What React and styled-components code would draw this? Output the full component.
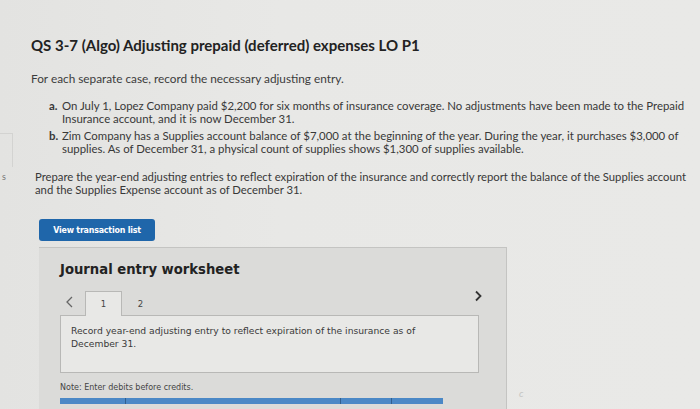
import React from "react";
import styled, { createGlobalStyle } from "styled-components";

const Global = createGlobalStyle`
  html, body {
    margin: 0;
    padding: 0;
    background: #e7e7e5;
    overflow: hidden;
  }
`;

const Page = styled.div`
  display: flex;
  width: 700px;
  height: 409px;
  overflow: hidden;
  background: linear-gradient(90deg, #e3e3e1 0%, #e8e8e6 40%, #e9e9e7 100%);
  font-family: Lato, "Open Sans", sans-serif;
  color: #333;
`;

const Sidebar = styled.div`
  width: 13px;
  flex-shrink: 0;
  padding-top: 133px;
  display: flex;
  flex-direction: column;
`;

const SideCell = styled.div`
  height: 33px;
  border-top: 1px solid #d3d3d1;
  border-right: 1px solid #d3d3d1;
`;

const SideLabel = styled.div`
  margin-top: 4px;
  font-size: 9px;
  color: #777;
  padding-left: 2px;
`;

const Main = styled.div`
  flex: 1;
  padding: 35px 0 0 18px;
  display: flex;
  flex-direction: column;
`;

const Title = styled.h1`
  margin: 0;
  font-size: 15px;
  line-height: 20px;
  font-weight: 700;
  color: #222;
`;

const Intro = styled.p`
  margin: 17px 0 0;
  font-size: 11.8px;
  line-height: 14px;
  color: #3c3c3c;
`;

const List = styled.div`
  margin: 13px 0 0 18px;
  width: 640px;
  display: flex;
  flex-direction: column;
  gap: 4px;
`;

const Item = styled.div`
  display: flex;
  font-size: 11.4px;
  line-height: 13px;
  color: #383838;
`;

const Mark = styled.span`
  width: 13px;
  flex-shrink: 0;
  font-weight: 700;
`;

const Prepare = styled.p`
  margin: 15px 0 0 4px;
  width: 662px;
  font-size: 11.3px;
  line-height: 13px;
  color: #383838;
`;

const Button = styled.button`
  margin: 23px 0 0 8px;
  align-self: flex-start;
  width: 116px;
  height: 22px;
  border: none;
  border-radius: 3px;
  background: #1f66aa;
  color: #fff;
  font-family: "DejaVu Sans Condensed", "DejaVu Sans", sans-serif;
  font-weight: 700;
  font-size: 8.8px;
  letter-spacing: -0.2px;
  padding: 0;
`;

const Lower = styled.div`
  display: flex;
  flex: 1;
  align-items: stretch;
`;

const Panel = styled.div`
  margin: 6px 0 0 8px;
  width: 468px;
  flex: none;
  background: #dbdbd9;
  border-top: 1px solid #c4c4c2;
  border-right: 1px solid #c4c4c2;
  padding: 13px 27px 0 21px;
  box-sizing: border-box;
  font-family: "DejaVu Sans", sans-serif;
`;

const PanelTitle = styled.h2`
  margin: 0;
  font-size: 13.2px;
  line-height: 18px;
  font-weight: 700;
  color: #222;
`;

const TabRow = styled.div`
  margin: 11px 0 0 2px;
  display: flex;
  align-items: flex-end;
  height: 25px;
`;

const Arrow = styled.span`
  width: 20px;
  align-self: center;
  padding-left: 3px;
`;

const Tab = styled.div`
  width: 37px;
  height: 25px;
  box-sizing: border-box;
  display: flex;
  align-items: center;
  justify-content: center;
  font-size: 8.5px;
  color: #444;
  background: ${(p) => (p.$active ? "#e8e8e6" : "transparent")};
  border: 1px solid ${(p) => (p.$active ? "#b8b8b6" : "transparent")};
  border-bottom: none;
  margin-bottom: -1px;
  position: relative;
`;

const NextArrow = styled.div`
  margin-left: auto;
  align-self: flex-start;
  margin-top: -3px;
  margin-right: -4px;
`;

const Prompt = styled.div`
  height: 58px;
  box-sizing: border-box;
  background: #e8e8e6;
  border: 1px solid #b8b8b6;
  padding: 8px 10px;
  font-size: 9.2px;
  line-height: 13px;
  color: #3a3a3a;
`;

const Note = styled.div`
  margin-top: 10px;
  font-size: 8px;
  color: #444;
`;

const Bar = styled.div`
  margin-top: 6px;
  width: 383px;
  height: 6px;
  background: #4b88c6;
  display: grid;
  grid-template-columns: 65px 215px 51px 1fr;
  & > span + span {
    border-left: 1px solid #2f5f90;
  }
`;

const Corner = styled.div`
  width: 20px;
  align-self: flex-end;
  font-size: 10px;
  color: #c5c5c3;
  margin: 0 0 10px 12px;
  font-style: italic;
`;

const Chevron = ({ dir }) => (
  <svg width="10" height="12" viewBox="0 0 10 12">
    <path
      d={dir === "left" ? "M7 1 L2 6 L7 11" : "M3 1.5 L7.5 6 L3 10.5"}
      fill="none"
      stroke={dir === "left" ? "#666" : "#333"}
      strokeWidth={dir === "left" ? 1.3 : 1.8}
    />
  </svg>
);

export default function App() {
  return (
    <>
      <Global />
      <Page>
        <Sidebar>
          <SideCell />
          <SideLabel>s</SideLabel>
        </Sidebar>
        <Main>
          <Title>QS 3-7 (Algo) Adjusting prepaid (deferred) expenses LO P1</Title>
          <Intro>For each separate case, record the necessary adjusting entry.</Intro>
          <List>
            <Item>
              <Mark>a.</Mark>
              <span>
                On July 1, Lopez Company paid $2,200 for six months of insurance coverage. No adjustments have been made to the Prepaid Insurance account, and it is now December 31.
              </span>
            </Item>
            <Item>
              <Mark>b.</Mark>
              <span>
                Zim Company has a Supplies account balance of $7,000 at the beginning of the year. During the year, it purchases $3,000 of supplies. As of December 31, a physical count of supplies shows $1,300 of supplies available.
              </span>
            </Item>
          </List>
          <Prepare>
            Prepare the year-end adjusting entries to reflect expiration of the insurance and correctly report the balance of the Supplies account and the Supplies Expense account as of December 31.
          </Prepare>
          <Button>View transaction list</Button>
          <Lower>
            <Panel>
              <PanelTitle>Journal entry worksheet</PanelTitle>
              <TabRow>
                <Arrow>
                  <Chevron dir="left" />
                </Arrow>
                <Tab $active>1</Tab>
                <Tab>2</Tab>
                <NextArrow>
                  <Chevron dir="right" />
                </NextArrow>
              </TabRow>
              <Prompt>
                Record year-end adjusting entry to reflect expiration of the insurance as of
                <br />
                December 31.
              </Prompt>
              <Note>Note: Enter debits before credits.</Note>
              <Bar>
                <span />
                <span />
                <span />
                <span />
              </Bar>
            </Panel>
            <Corner>c</Corner>
          </Lower>
        </Main>
      </Page>
    </>
  );
}
